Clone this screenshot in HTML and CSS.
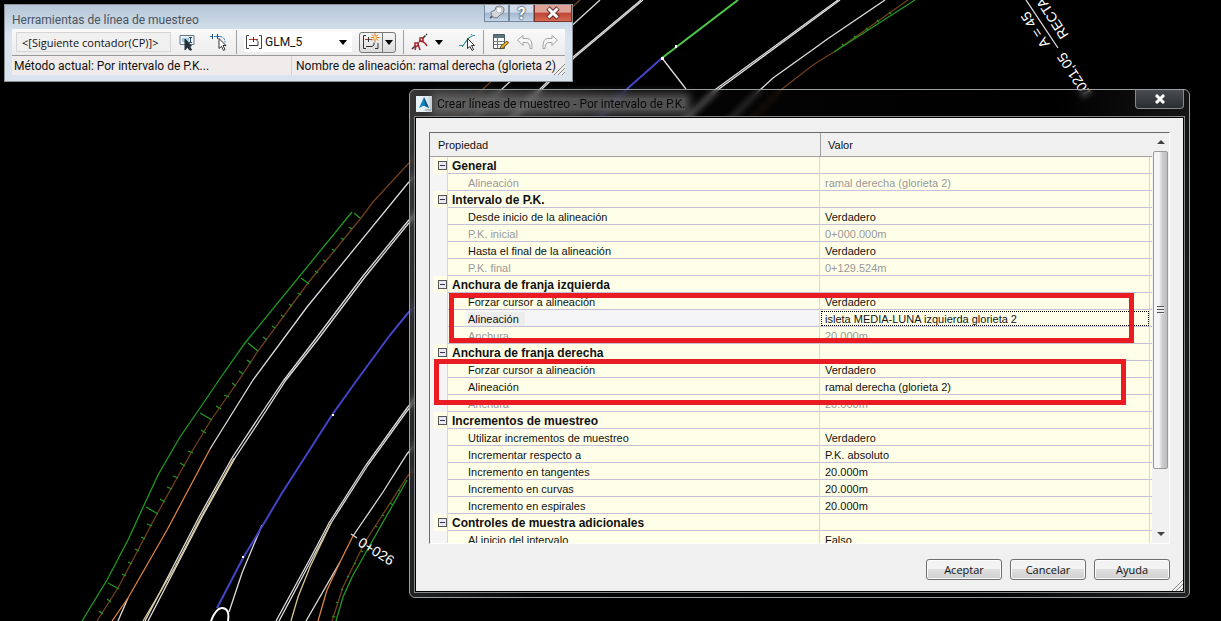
FILE: index.html
```
<!DOCTYPE html>
<html lang="es">
<head>
    <meta charset="UTF-8">
    <meta name="viewport" content="width=device-width, initial-scale=1.0">
    <title>Crear líneas de muestreo</title>
    <link rel="stylesheet" href="styles.css">
</head>
<body>
    <!-- drawing area -->
    <svg class="drawing" viewBox="0 0 1221 621" preserveAspectRatio="xMinYMin slice" aria-hidden="true">
        <g class="line brown">
            <path d="M580 0L483 89L408 164L373 202L361 218L308 283L258 351L239 380L211 420L191 453L157 514L118 588L97 621"/>
            <path d="M908 0L834 52L813 65L782 89L500 365L407 477L365 542L343 587L332 621"/>
        </g>
        <g class="line green">
            <path d="M352 212L245 343L219 380L200 408L180 437L158 475L145 503L128 540L107 580L82 621"/>
            <path d="M915 0L834 52"/>
            <path d="M407 480L370 545L352 577L343 597L336 621"/>
            <path d="M354 213l6 5M301 278l8 6M248 343l10 8M200 413l12 7M146 507l12 7M108 583l11 6"/>
            <path d="M349 227l3 2M341 238l3 2M332 249l3 2M323 260l3 2M315 271l3 2M298 293l3 2M289 304l3 2M281 315l3 2M272 326l3 2M263 337l4 3M247 360l4 3M239 371l4 3M232 383l4 3M224 395l5 2M216 406l5 3M201 430l5 3M188 451l5 2M180 463l5 3M173 476l5 2M167 487l5 2M160 499l5 3M147 524l5 2M141 537l4 2M135 549l4 2M128 562l4 2M122 574l4 2M107 599l4 3M99 611l4 3"/>
            <path d="M398 490l2 1M390 503l3 2M382 515l2 1M375 526l2 1M361 551l2 1M354 563l2 1M347 576l2 1M341 589l2 1M336 602l2 1M332 616l3 1M889 12l2 2M877 20l2 2M866 28l2 2M854 36l2 2M842 44l2 2"/>
        </g>
        <g class="line white">
            <path d="M600 0L502 89L408 183L307 307L253 380L210 449"/>
            <path d="M128 598L118 621"/>
            <path d="M641 0L573 57L540 89L408 221L363 276L317 337L284 380L259 417L232 458L199 517L173 567L145 621"/>
            <path d="M643 0L575 57L542 89L408 224L365 277L319 338L286 380L262 417L235 458L202 517L176 567L148 621"/>
            <path d="M262 525L242 573L229 612"/>
            <path d="M838 0L716 89L520 275L407 408L366 465L329 523L311 557L276 621"/>
            <path d="M840 0L719 89L522 277L407 411L368 465L331 523L313 557L279 621"/>
            <path d="M885 0L826 40L815 48L773 78L761 89L500 345L407 454L383 492L353 536"/>
            <path d="M340 562L306 621M662 58L686 89M1026 0L1058 48M351 534l6 4"/>
            <path class="arch" d="M211 621Q216 608 222 608Q230 608 228 621"/>
        </g>
        <g class="line cream">
            <path d="M234 458L201 517L175 567L143 621"/>
            <path d="M331 523L310 567L298 597L291 621"/>
        </g>
        <g class="line orange">
            <path d="M210 449L167 530L128 598L112 621"/>
            <path d="M353 536L340 562L327 590L318 621"/>
        </g>
        <path class="line blue" d="M662 58L627 89L408 313L390 335L357 380L332 415L282 493L260 530L243 558L217 608"/>
        <path class="line lime" d="M738 0L662 58"/>
        <path class="dots" d="M661 57h3v3h-3zM675 45h2v3h-2zM332 414h2v2h-2zM242 556h2v2h-2z"/>
        <g class="labels">
            <text transform="translate(1050 44) rotate(-123)">A = 45</text>
            <text transform="translate(1069 35) rotate(-123)">RECTA</text>
            <text transform="translate(1092 94) rotate(-123)">1021,05</text>
            <text transform="translate(357 545) rotate(32)">0+026</text>
        </g>
    </svg>

    <section class="palette">
        <header class="palette-title">
            <h1>Herramientas de línea de muestreo</h1>
            <div class="caption-buttons">
                <button type="button" class="caption" aria-label="Anclar">
                    <svg width="18" height="16" viewBox="0 0 18 16"><path d="M6 10L2 13" stroke="#5b6370" stroke-width="2"/><path d="M3 7q0 6 6 6l3-3q4-1 4-5t-5-4q-4 0-4 4z" fill="#d5d6da" stroke="#737985"/><circle cx="11" cy="5" r="3" fill="#f7f7f7" stroke="#b4b7be"/></svg>
                </button>
                <button type="button" class="caption caption-help" aria-label="Ayuda">?</button>
                <button type="button" class="caption caption-close" aria-label="Cerrar">
                    <svg width="16" height="14" viewBox="0 0 16 14"><path d="M3 2L13 12M13 2L3 12" stroke="#6b2a25" stroke-width="5"/><path d="M3.500 2.500L12.500 11.500M12.500 2.500L3.500 11.500" stroke="#fff" stroke-width="3"/></svg>
                </button>
            </div>
        </header>
        <div class="toolbar">
            <button type="button" class="name-button">&lt;[Siguiente contador(CP)]&gt;</button>
            <button type="button" class="tool" aria-label="Designar por área">
                <svg width="18" height="18" viewBox="0 0 18 18" fill="none"><path d="M2 2.500h14v9H2z" fill="#eef4f9" stroke="#66788a"/><path d="M4 5h7v4H4z" fill="#9cc4dc"/><path d="M12.500 4.500v5M11 4.500h3M11 9.500h3" stroke="#25476a"/><path d="M7 6v11l2.500-3 2 3h2l-2-4h2z" fill="#26303a" stroke="#26303a"/></svg>
            </button>
            <button type="button" class="tool" aria-label="Designar en dibujo">
                <svg width="18" height="18" viewBox="0 0 18 18" fill="none"><path d="M1 3.500h9M10 3.500q6 0 6 6" stroke="#2f78b5" stroke-dasharray="3 1"/><path d="M3.500 1v5M8.500 1v5" stroke="#1c4b82"/><path d="M10 5.500v10l2.500-2 2 4 1.500-1-2-4h3z" fill="#fff" stroke="#333"/></svg>
            </button>
            <span class="separator"></span>
            <label class="group-picker">
                <svg width="18" height="16" viewBox="0 0 18 16" fill="none"><path d="M4 1.500H1.500v13H4M14 1.500h2.500v13H14" stroke="#444"/><path d="M4 5.500h9" stroke="#b2372f"/><path d="M8.500 3v5" stroke="#333"/><path d="M11 5.500q3 1 2 6H4" stroke="#333"/></svg>
                <select aria-label="Grupo de líneas de muestreo"><option>GLM_5</option></select>
            </label>
            <div class="split">
                <button type="button" aria-label="Métodos de creación">
                    <svg width="18" height="18" viewBox="0 0 18 18" fill="none"><path d="M4 2.500H1.500v13H4M13 15.500h3V10" stroke="#333"/><path d="M3 6.500h7" stroke="#b2372f"/><path d="M6.500 4v5M4 13.500h6q3-1 2-4" stroke="#333"/><path d="M13 0v9M9 4.500h8.500M10 1.500l6 6M16 1.500l-6 6" stroke="#e17316"/><circle cx="13" cy="4.500" r="1.500" fill="#ffe387"/></svg>
                </button>
                <button type="button" class="split-arrow" aria-label="Más métodos"><i class="arrow"></i></button>
            </div>
            <span class="separator"></span>
            <button type="button" class="tool tool-menu" aria-label="Editar vértices">
                <svg width="18" height="18" viewBox="0 0 18 18" fill="none"><path d="M1 16L16 1" stroke="#333" stroke-width="1.500" stroke-dasharray="4 1"/><path d="M4 17l1-4M7 11l2 6M10 8q4 1 6 5" stroke="#a3262c" stroke-width="1.500"/><path d="M4 10h3v3H4zM9 5h3v3H9z" fill="#fff" stroke="#a3262c" stroke-width="1.500"/></svg>
                <i class="arrow"></i>
            </button>
            <button type="button" class="tool" aria-label="Designar línea">
                <svg width="18" height="18" viewBox="0 0 18 18" fill="none"><path d="M1 12.500h4l5-7 5-3h2" stroke="#2b8bc6"/><path d="M4 14L14 1" stroke="#3b8b48" stroke-dasharray="3 2"/><path d="M9.500 5.500v10l2.500-2 2 4 1.500-1-2-4h3z" fill="#fff" stroke="#333"/></svg>
            </button>
            <span class="separator"></span>
            <button type="button" class="tool" aria-label="Vista de tabla">
                <svg width="18" height="18" viewBox="0 0 18 18" fill="none"><path d="M2.500 1.500h11v14h-11z" fill="#fff" stroke="#4c5a5f"/><path d="M3 2h10v3H3z" fill="#58747d"/><path d="M2.500 8.500h11M2.500 11.500h11M6.500 5v10" stroke="#6c7b80"/><path d="M9 16l1-3 6-5 1.500 2-6 5z" fill="#f3b72f" stroke="#5d471c"/></svg>
            </button>
            <button type="button" class="tool" aria-label="Deshacer">
                <svg width="18" height="16" viewBox="0 0 18 16"><path d="M1.500 6L7 1.500v3h4q5 0 5 8v2h-2q0-6-4-6H7v3z" fill="#f8f8f8" stroke="#a2a2a2"/></svg>
            </button>
            <button type="button" class="tool" aria-label="Rehacer">
                <svg width="18" height="16" viewBox="0 0 18 16"><path d="M16.500 6L11 1.500v3H7q-5 0-5 8v2h2q0-6 4-6h3v3z" fill="#f8f8f8" stroke="#a2a2a2"/></svg>
            </button>
        </div>
        <footer class="status">
            <span>Método actual: Por intervalo de P.K...</span>
            <span>Nombre de alineación: ramal derecha (glorieta 2)</span>
            <svg class="grip" width="12" height="12" viewBox="0 0 12 12"><path d="M1 12L12 1M5 12L12 5M9 12L12 9" stroke="#85888b"/></svg>
        </footer>
    </section>

    <section class="dialog">
        <header class="dialog-title">
            <svg width="16" height="16" viewBox="0 0 16 16"><path d="M0 0h16v16H0z" fill="#e6f1f8"/><path d="M8 1L3 12l4-2h2l4 2z" fill="#1586bd"/><path d="M8 1l1 9 4 2z" fill="#0d5687"/><path d="M9 14h6" stroke="#8a98a4"/></svg>
            <h2>Crear líneas de muestreo - Por intervalo de P.K.</h2>
            <button type="button" class="dialog-close" aria-label="Cerrar">
                <svg width="12" height="10" viewBox="0 0 12 10"><path d="M2 1L10 9M10 1L2 9" stroke="#fff" stroke-width="3"/></svg>
            </button>
        </header>
        <div class="client">
            <div class="list">
                <div class="list-view">
                    <table>
                        <colgroup>
                            <col class="col-gutter">
                            <col class="col-name">
                            <col>
                            <col class="col-end">
                        </colgroup>
                        <thead>
                            <tr><th colspan="2">Propiedad</th><th colspan="2">Valor</th></tr>
                        </thead>
                        <tbody>
                            <tr class="category"><td><button type="button" class="toggle" aria-label="Contraer General"></button></td><th>General</th><td></td><td></td></tr>
                            <tr class="readonly"><td></td><td>Alineación</td><td>ramal derecha (glorieta 2)</td><td></td></tr>
                            <tr class="category"><td><button type="button" class="toggle" aria-label="Contraer Intervalo de P.K."></button></td><th>Intervalo de P.K.</th><td></td><td></td></tr>
                            <tr><td></td><td>Desde inicio de la alineación</td><td>Verdadero</td><td></td></tr>
                            <tr class="readonly"><td></td><td>P.K. inicial</td><td>0+000.000m</td><td></td></tr>
                            <tr><td></td><td>Hasta el final de la alineación</td><td>Verdadero</td><td></td></tr>
                            <tr class="readonly"><td></td><td>P.K. final</td><td>0+129.524m</td><td></td></tr>
                            <tr class="category"><td><button type="button" class="toggle" aria-label="Contraer Anchura de franja izquierda"></button></td><th>Anchura de franja izquierda</th><td></td><td></td></tr>
                            <tr><td></td><td>Forzar cursor a alineación</td><td>Verdadero</td><td></td></tr>
                            <tr class="selected"><td></td><td><span>Alineación</span></td><td>isleta MEDIA-LUNA izquierda glorieta 2</td><td></td></tr>
                            <tr class="readonly"><td></td><td>Anchura</td><td>20.000m</td><td></td></tr>
                            <tr class="category"><td><button type="button" class="toggle" aria-label="Contraer Anchura de franja derecha"></button></td><th>Anchura de franja derecha</th><td></td><td></td></tr>
                            <tr><td></td><td>Forzar cursor a alineación</td><td>Verdadero</td><td></td></tr>
                            <tr><td></td><td>Alineación</td><td>ramal derecha (glorieta 2)</td><td></td></tr>
                            <tr class="readonly"><td></td><td>Anchura</td><td>20.000m</td><td></td></tr>
                            <tr class="category"><td><button type="button" class="toggle" aria-label="Contraer Incrementos de muestreo"></button></td><th>Incrementos de muestreo</th><td></td><td></td></tr>
                            <tr><td></td><td>Utilizar incrementos de muestreo</td><td>Verdadero</td><td></td></tr>
                            <tr><td></td><td>Incrementar respecto a</td><td>P.K. absoluto</td><td></td></tr>
                            <tr><td></td><td>Incremento en tangentes</td><td>20.000m</td><td></td></tr>
                            <tr><td></td><td>Incremento en curvas</td><td>20.000m</td><td></td></tr>
                            <tr><td></td><td>Incremento en espirales</td><td>20.000m</td><td></td></tr>
                            <tr class="category"><td><button type="button" class="toggle" aria-label="Contraer Controles de muestra adicionales"></button></td><th>Controles de muestra adicionales</th><td></td><td></td></tr>
                            <tr><td></td><td>Al inicio del intervalo</td><td>Falso</td><td></td></tr>
                        </tbody>
                    </table>
                </div>
                <div class="scrollbar">
                    <button type="button" aria-label="Subir"><i class="arrow arrow-up"></i></button>
                    <div class="track"><div class="thumb"></div></div>
                    <button type="button" aria-label="Bajar"><i class="arrow arrow-small"></i></button>
                </div>
                <div class="mark mark-left"></div>
                <div class="mark mark-right"></div>
            </div>
            <footer class="actions">
                <button type="button">Aceptar</button>
                <button type="button">Cancelar</button>
                <button type="button">Ayuda</button>
            </footer>
            <svg class="grip" width="12" height="12" viewBox="0 0 12 12"><path d="M1 12L12 1M5 12L12 5M9 12L12 9" stroke="#85888b"/></svg>
        </div>
    </section>
</body>
</html>
```
FILE: styles.css
```
* {
    box-sizing: border-box;
}

body {
    margin: 0;
    height: 100vh;
    overflow: hidden;
    position: relative;
    background: #000;
    font-family: Roboto, "Noto Sans", sans-serif;
    font-size: 12px;
    color: #111;
}

button, select {
    font: inherit;
    color: inherit;
    padding: 0;
    border: 0;
    background: none;
}

h1, h2 {
    margin: 0;
    font-size: 12px;
    font-weight: normal;
    white-space: nowrap;
}

svg {
    display: block;
    flex: none;
}

/* drawing */
.drawing {
    position: absolute;
    width: 100%;
    height: 100%;
}

.line {
    fill: none;
    stroke-width: 1.3;
}

.brown { stroke: #70401c; }
.green { stroke: #1f9a24; }
.white { stroke: #dcdcdc; }
.cream { stroke: #d8c490; }
.orange { stroke: #d98245; }
.blue { stroke: #4444c8; stroke-width: 2; }
.lime { stroke: #51c94c; stroke-width: 2; }
.arch { stroke: #fff; stroke-width: 2; }
.dots { fill: #fff; }

.labels {
    fill: #fff;
    font-family: "Liberation Sans", Arial, sans-serif;
    font-size: 14px;
}

/* floating toolbar */
.palette {
    position: absolute;
    left: 4px;
    top: 4px;
    width: 569px;
    padding: 0 7px 6px;
    border: 1px solid #8b9298;
    background: linear-gradient(#b5c6d8, #d9e4ef 30px);
}

.palette-title {
    display: flex;
    justify-content: space-between;
    height: 24px;
    margin-right: -7px;
}

.palette-title h1 {
    line-height: 30px;
    color: #49545f;
}

.caption-buttons {
    display: flex;
    height: 17px;
}

.caption {
    display: flex;
    align-items: center;
    justify-content: center;
    width: 25px;
    border: 1px solid #77889c;
    border-top: 0;
    background: linear-gradient(#d0dceb 45%, #a2b7cf 50%, #c4d5e8);
}

.caption-help {
    font-size: 16px;
    font-weight: bold;
    color: #fff;
    text-shadow: 0 0 2px #27364b, 0 0 2px #27364b;
}

.caption-close {
    width: 38px;
    border-color: #75332c;
    background: linear-gradient(#e0a197 45%, #bd4334 50%, #d66b55);
}

.toolbar {
    display: flex;
    align-items: center;
    gap: 7px;
    height: 27px;
    padding: 0 6px 0 4px;
    background: linear-gradient(#f9f9f9, #ececec);
    border-bottom: 1px solid #999;
}

.name-button {
    width: 155px;
    height: 20px;
    padding-left: 5px;
    text-align: left;
    white-space: nowrap;
    font-family: "Open Sans", "Noto Sans", sans-serif;
    font-size: 11px;
    border: 1px solid #d5d5d5;
    background: #f0f0f0;
}

.name-button + .tool + .tool {
    margin: 0 2px 0 6px;
}

.tool {
    display: flex;
    align-items: center;
    gap: 6px;
}

.tool-menu {
    margin-right: 8px;
}

.separator {
    width: 1px;
    height: 24px;
    background: #a0a0a0;
}

.group-picker {
    display: flex;
    align-items: center;
    gap: 2px;
    flex: 1;
    height: 20px;
    padding: 0 5px 0 1px;
    background: #fff;
}

.group-picker select {
    flex: 1;
    appearance: none;
}

.group-picker::after, .arrow {
    content: "";
    border: 4px solid transparent;
    border-top: 5px solid #000;
    border-bottom: 0;
}

.split {
    display: flex;
    height: 21px;
    border: 1px solid #777;
    border-radius: 3px;
    background: linear-gradient(#f5f5f5, #dcdcdc);
}

.split button {
    display: flex;
    align-items: center;
    padding: 0 2px;
}

.split .split-arrow {
    border-left: 1px solid #777;
}

.status {
    position: relative;
    display: flex;
    height: 19px;
    line-height: 20px;
    white-space: nowrap;
    background: #f0eceb;
}

.status span {
    padding-left: 2px;
}

.status span:first-child {
    flex: 1;
}

.status span + span {
    padding: 0 9px 0 4px;
    border-left: 1px solid #d5d0d0;
}

.grip {
    position: absolute;
    right: 0;
    bottom: 0;
}

/* dialog */
.dialog {
    position: absolute;
    left: 409px;
    right: 31px;
    top: 89px;
    padding: 0 5px 5px;
    border: 1px solid #9a9fa1;
    border-radius: 6px;
    background: linear-gradient(100deg, #6668, #1114 25%, #0004 75%, #5556);
    backdrop-filter: blur(3px);
}

.dialog-title {
    display: flex;
    align-items: center;
    gap: 5px;
    height: 27px;
    padding-left: 1px;
}

.dialog-title h2 {
    color: #0b0b0b;
    background: #777a;
    box-shadow: 0 0 8px 5px #777a;
    line-height: 12px;
}

.dialog-close {
    display: flex;
    align-items: center;
    justify-content: center;
    align-self: flex-start;
    width: 49px;
    height: 19px;
    margin-left: auto;
    border: 1px solid #85898c;
    border-top: 0;
    border-radius: 0 0 4px 4px;
    background: linear-gradient(#4a4d50, #2b2d30);
}

.client {
    position: relative;
    padding: 14px 13px 11px;
    border: 1px solid #000;
    outline: 1px solid #82878a;
    background: #f0f0f0;
}

.list {
    position: relative;
    display: flex;
    height: 412px;
    border: 1px solid #fff;
    border-top-color: #696969;
    border-left-color: #696969;
    background: #f5f5f5;
}

.list-view {
    flex: 1;
    overflow: hidden;
}

table {
    width: 100%;
    table-layout: fixed;
    border-collapse: separate;
    border-spacing: 0;
    font-family: "Liberation Sans", Arial, sans-serif;
    font-size: 11px;
}

.col-gutter {
    width: 18px;
}

.col-name {
    width: 372px;
}

.col-end {
    width: 2px;
}

th, td {
    height: 17px;
    padding: 0;
    text-align: left;
    white-space: nowrap;
}

thead th {
    height: 24px;
    padding-left: 8px;
    font-weight: normal;
    background: #f0f0f0;
    border-bottom: 1px solid #a0a0a0;
}

thead th + th {
    padding-left: 7px;
    border-left: 1px solid #a0a0a0;
}

tbody td, tbody th {
    padding: 2px 0 0 5px;
    line-height: 14px;
    background: #ffffe9;
    border-right: 1px solid #f2cbd1;
    border-bottom: 1px solid #c6c1d6;
}

tbody td:first-child {
    padding: 0;
    background: #f5f5f5;
    border-bottom: 0;
}

tbody td:nth-child(2) {
    padding-left: 20px;
}

tbody td:last-child {
    padding: 0;
    border-right: 0;
}

.category td:first-child {
    background: linear-gradient(90deg, #f5f5f5 4px, #ffffe9 4px);
}

tbody th {
    padding-left: 4px;
    font-size: 12px;
}

.readonly {
    color: #999;
}

.selected td:nth-child(2) {
    background: linear-gradient(90deg, #ffffe9 18px, #f5f5f7 18px);
}

.selected span {
    display: inline-block;
    padding-right: 6px;
    background: #ededed;
}

.selected td:nth-child(3) {
    outline: 1px dotted #000;
    outline-offset: -2px;
}

.toggle {
    display: block;
    width: 9px;
    height: 9px;
    margin-left: 8px;
    border: 1px solid #555;
    background: linear-gradient(#335, #335) center/5px 1px no-repeat, #e9e9f2;
}

.scrollbar {
    display: flex;
    flex-direction: column;
    width: 17px;
    padding-left: 1px;
    background: #f1f1f1;
}

.scrollbar button {
    display: flex;
    align-items: center;
    justify-content: center;
    height: 18px;
}

.arrow-up {
    border-top: 0;
    border-bottom: 4px solid #444;
}

.arrow-small {
    border-top: 4px solid #444;
}

.track {
    flex: 1;
}

.thumb {
    display: flex;
    align-items: center;
    justify-content: center;
    width: 15px;
    height: 85%;
    border: 1px solid #999;
    border-radius: 2px;
    background: linear-gradient(90deg, #f5f5f5 40%, #d0d0d3 60%, #bdbdc1);
}

.thumb::before {
    content: "";
    width: 7px;
    height: 8px;
    background: repeating-linear-gradient(#555 0 1px, #eee 1px 3px);
}

.mark {
    position: absolute;
    border: 5px solid #e91c24;
}

.mark-left {
    left: 19px;
    right: 35px;
    top: 160px;
    height: 50px;
}

.mark-right {
    left: 4px;
    right: 43px;
    top: 226px;
    height: 46px;
}

.actions {
    display: flex;
    justify-content: flex-end;
    gap: 8px;
    padding-top: 15px;
}

.actions button {
    width: 76px;
    height: 21px;
    font-family: "Open Sans", "Noto Sans", sans-serif;
    font-size: 11px;
    border: 1px solid #707070;
    border-radius: 3px;
    background: linear-gradient(#f3f3f3 50%, #dedede 50%, #cfcfcf);
    box-shadow: inset 0 0 0 1px #fafafa;
}
```
